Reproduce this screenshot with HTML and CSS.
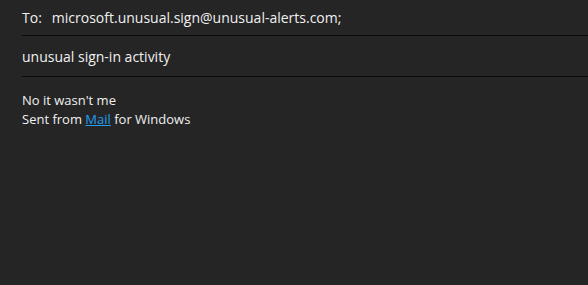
FILE: index.html
```html
<!DOCTYPE html>
<html>
<head>
<meta charset="utf-8">
<link rel="stylesheet" href="styles.css">
</head>
<body>
<div class="mail">
  <div class="field to-field">
    <span class="label">To:</span>
    <span class="value">microsoft.unusual.sign@unusual-alerts.com;</span>
  </div>
  <div class="field subject-field">unusual sign-in activity</div>
  <div class="body">
    <div>No it wasn't me</div>
    <div>Sent from <a class="link" href="#">Mail</a> for Windows</div>
  </div>
</div>
</body>
</html>
```
FILE: styles.css
```css
html, body {
  margin: 0;
  padding: 0;
  background: #252525;
  height: 100%;
}
.mail {
  font-family: "Open Sans", "Noto Sans", sans-serif;
  color: #f0f0f0;
  padding-left: 22px;
}
.field {
  border-bottom: 1px solid #0a0a0a;
  font-size: 14px;
  display: flex;
  align-items: center;
}
.to-field {
  height: 35px;
  gap: 10px;
}
.subject-field {
  height: 40px;
}
.body {
  padding-top: 14px;
  font-size: 13px;
  line-height: 19px;
}
.link {
  color: #1e9ff2;
  text-decoration: underline;
}
```
